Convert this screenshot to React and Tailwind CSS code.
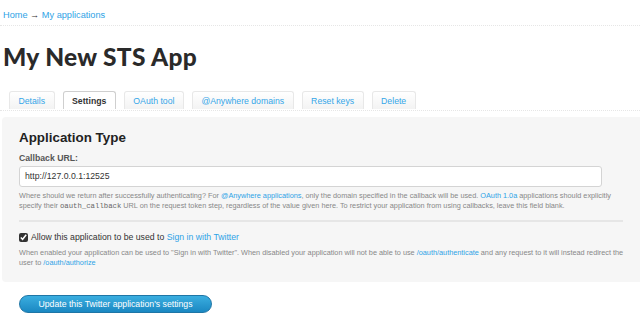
import React from 'react';

const tabs = ['Details', 'Settings', 'OAuth tool', '@Anywhere domains', 'Reset keys', 'Delete'];

export default function App() {
  return (
    <div className="min-h-screen w-[640px] overflow-hidden bg-white font-['Liberation_Sans',Arial,sans-serif] text-[#333]">
      {/* breadcrumb */}
      <div className="border-b border-dotted border-[#e6e6e6] pl-[3px] pt-[10px] pb-[5px] text-[9.2px] leading-[10px] text-[#2ea3e6]">
        <span>Home</span> <span className="text-[#333]">→</span> <span>My applications</span>
      </div>

      <h1 className="pl-[3px] pt-[17px] font-['Lato',sans-serif] text-[24.5px] font-black leading-[28px] tracking-[0.3px] text-[#2a2a2a]">
        My New STS App
      </h1>

      {/* tabs */}
      <div className="mt-[20px] flex gap-[8px] border-b border-dotted border-[#e6e6e6] pl-[9px] pb-[1px]">
        {tabs.map((t) => (
          <div
            key={t}
            className={
              t === 'Settings'
                ? 'h-[18px] rounded-t-[3px] border border-b-0 border-[#cfcfcf] bg-white px-[8.5px] text-[8.7px] leading-[18px] font-bold text-[#333]'
                : 'h-[18px] rounded-t-[3px] border border-b-0 border-[#e8e8e8] bg-gradient-to-b from-white to-[#f3f3f3] px-[8.5px] text-[8.7px] leading-[18px] text-[#35a6e8]'
            }
          >
            {t}
          </div>
        ))}
      </div>

      {/* panel */}
      <div className="ml-[2px] mt-[6px] w-[660px] rounded-[4px] bg-[#f6f6f6] pl-[17px] pt-[12px] pb-[14px]">
        <h2 className="text-[13.4px] font-bold leading-[18px] text-[#222]">Application Type</h2>

        <div className="mt-[6px] text-[8.7px] font-bold leading-[11px] text-[#555]">Callback URL:</div>
        <div className="mt-[2px] flex h-[21px] w-[583px] items-center rounded-[3px] border border-[#d4d4d4] bg-white pl-[5px] text-[8.7px] text-[#333]">
          http://127.0.0.1:12525
        </div>
        <p className="mt-[4px] whitespace-nowrap text-[7.3px] leading-[10px] text-[#888]">
          Where should we return after successfully authenticating? For{' '}
          <span className="text-[#2ea3e6]">@Anywhere applications</span>, only the domain specified in the callback will be used.{' '}
          <span className="text-[#2ea3e6]">OAuth 1.0a</span> applications should explicitly
          <br />
          specify their <span className="font-['Liberation_Mono',monospace] text-[#666]">oauth_callback</span> URL on the request token step, regardless of the value given here. To restrict your application from using callbacks, leave this field blank.
        </p>

        <div className="mt-[9px] h-[2px] w-[604px] bg-[#e6e6e6]" />

        <label className="mt-[9px] flex items-center gap-[3px] text-[8.7px] leading-[12px] text-[#333]">
          <input type="checkbox" defaultChecked className="m-0 h-[9px] w-[9px] accent-[#333]" />
          <span>
            Allow this application to be used to <span className="text-[#2ea3e6]">Sign in with Twitter</span>
          </span>
        </label>
        <p className="mt-[5px] whitespace-nowrap text-[7.3px] leading-[10px] text-[#888]">
          When enabled your application can be used to "Sign in with Twitter". When disabled your application will not be able to use{' '}
          <span className="text-[#2ea3e6]">/oauth/authenticate</span> and any request to it will instead redirect the
          <br />
          user to <span className="text-[#2ea3e6]">/oauth/authorize</span>
        </p>
      </div>

      <div className="pl-[19px] pt-[13px]">
        <button className="block h-[18px] w-[193px] rounded-full border border-[#1f76a6] bg-gradient-to-b from-[#3aaee0] to-[#1a88c2] text-[8.7px] leading-[16px] text-white">
          Update this Twitter application's settings
        </button>
      </div>
    </div>
  );
}
